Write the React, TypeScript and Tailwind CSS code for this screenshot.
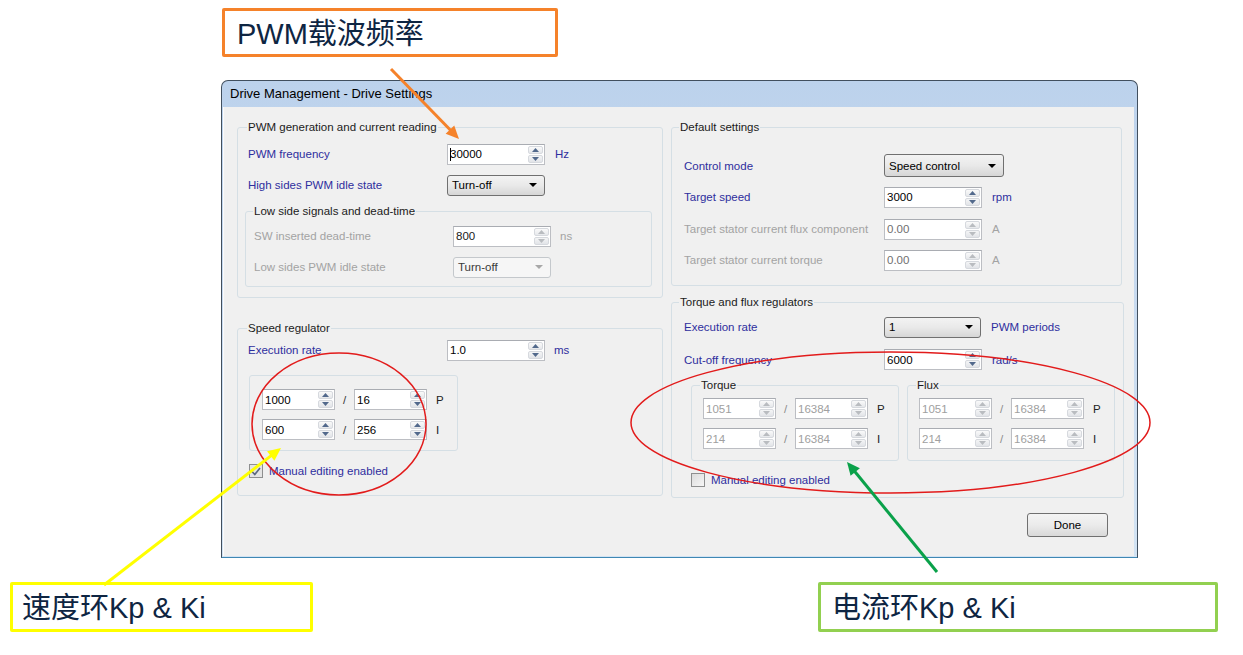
import React from "react";

const UI = "font-['Liberation_Sans',Arial,sans-serif] text-[11.5px] leading-[14px]";
const CJK = "font-['Liberation_Sans','Noto_Sans_CJK_SC',sans-serif]";

const BLUE = "text-[#2e2e9e]";
const GRAY = "text-[#a3a3a3]";

function Spin({ disabled }: { disabled?: boolean }) {
  const c = disabled ? "#b9bcc0" : "#52698c";
  return (
    <div className="flex w-[17px] flex-col gap-px p-px">
      <div className="flex flex-1 items-center justify-center rounded-[2px] border border-[#d6d9de] bg-gradient-to-b from-[#fafafa] to-[#e6e8eb]">
        <svg width="7" height="4" viewBox="0 0 7 4">
          <path d="M3.5 0L7 4H0z" fill={c} />
        </svg>
      </div>
      <div className="flex flex-1 items-center justify-center rounded-[2px] border border-[#d6d9de] bg-gradient-to-b from-[#f4f5f6] to-[#e2e4e8]">
        <svg width="7" height="4" viewBox="0 0 7 4">
          <path d="M0 0h7L3.5 4z" fill={c} />
        </svg>
      </div>
    </div>
  );
}

function NumBox({
  value,
  w = "w-[98px]",
  text = "text-black",
  disabled,
  caret,
}: {
  value: string;
  w?: string;
  text?: string;
  disabled?: boolean;
  caret?: boolean;
}) {
  return (
    <div
      className={`flex h-[21px] ${w} border border-[#bcbec3] border-t-[#a9acb2] bg-white`}
    >
      <div className={`flex flex-1 items-center pl-[2px] ${text}`}>
        {caret && <span className="mr-[-1px] h-[13px] w-px bg-black" />}
        {value}
      </div>
      <Spin disabled={disabled} />
    </div>
  );
}

function Combo({
  value,
  w = "w-[98px]",
  h = "h-[21px]",
  disabled,
}: {
  value: string;
  w?: string;
  h?: string;
  disabled?: boolean;
}) {
  return (
    <div
      className={`flex ${h} ${w} items-center justify-between rounded-[3px] border pl-[4px] pr-[7px] ${
        disabled
          ? "border-[#c4c8cc] bg-[#f6f6f6] text-[#3a3a3a]"
          : "border-[#707070] bg-gradient-to-b from-[#f3f3f3] via-[#e9e9e9] to-[#d6d6d6] text-black"
      }`}
    >
      <span>{value}</span>
      <svg width="8" height="4" viewBox="0 0 8 4">
        <path d="M0 0h8L4 4z" fill={disabled ? "#a8a8a8" : "#000"} />
      </svg>
    </div>
  );
}

function Row({
  label,
  labelClass,
  labelW = "w-[199px]",
  h = "h-[22px]",
  mt,
  children,
  unit,
  unitClass = BLUE,
  unitMl = "ml-[10px]",
}: {
  label: string;
  labelClass: string;
  labelW?: string;
  h?: string;
  mt: string;
  children: React.ReactNode;
  unit?: string;
  unitClass?: string;
  unitMl?: string;
}) {
  return (
    <div className={`flex ${h} ${mt} items-center`}>
      <div className={`${labelW} shrink-0 ${labelClass}`}>{label}</div>
      {children}
      {unit && <span className={`${unitMl} ${unitClass}`}>{unit}</span>}
    </div>
  );
}

function Legend({ children, className = "" }: { children: React.ReactNode; className?: string }) {
  return <legend className={`px-px text-[#1b1b1b] ${className}`}>{children}</legend>;
}

function Gains({
  rows,
  disabled,
}: {
  rows: { a: string; b: string; tag: string }[];
  disabled?: boolean;
}) {
  const t = disabled ? "text-[#a0a0a0]" : "text-black";
  return (
    <div className="flex flex-col gap-[9px]">
      {rows.map((r) => (
        <div key={r.tag} className="flex h-[21px] items-center">
          <NumBox value={r.a} w="w-[73px]" text={t} disabled={disabled} />
          <span className={`w-[19px] text-center ${disabled ? "text-[#8a8a8a]" : "text-[#333]"}`}>
            /
          </span>
          <NumBox value={r.b} w="w-[73px]" text={t} disabled={disabled} />
          <span className="ml-[9px] text-[#222]">{r.tag}</span>
        </div>
      ))}
    </div>
  );
}

function Check({ checked }: { checked?: boolean }) {
  return (
    <div
      className={`flex h-[14px] w-[14px] items-center justify-center border border-[#8e8f8f] ${
        checked ? "bg-[#e4e4e4]" : "bg-gradient-to-br from-[#dcdcdc] to-[#f6f6f6]"
      }`}
    >
      {checked && (
        <svg width="10" height="9" viewBox="0 0 10 9">
          <path d="M1 4.5L3.8 7.5L9 1" fill="none" stroke="#5b6880" strokeWidth="1.7" />
        </svg>
      )}
    </div>
  );
}

function arrowHead(x1: number, y1: number, x2: number, y2: number, len = 13, half = 6) {
  const dx = x2 - x1;
  const dy = y2 - y1;
  const d = Math.hypot(dx, dy);
  const ux = dx / d;
  const uy = dy / d;
  const bx = x2 - ux * len;
  const by = y2 - uy * len;
  return `${x2},${y2} ${bx - uy * half},${by + ux * half} ${bx + uy * half},${by - ux * half}`;
}

function Arrow({ x1, y1, x2, y2, color }: { x1: number; y1: number; x2: number; y2: number; color: string }) {
  const d = Math.hypot(x2 - x1, y2 - y1);
  const ex = x2 - ((x2 - x1) / d) * 10;
  const ey = y2 - ((y2 - y1) / d) * 10;
  return (
    <g>
      <line x1={x1} y1={y1} x2={ex} y2={ey} stroke={color} strokeWidth="3" />
      <polygon points={arrowHead(x1, y1, x2, y2)} fill={color} />
    </g>
  );
}

export default function App() {
  return (
    <div className={`relative h-[655px] w-[1243px] overflow-hidden bg-white ${UI}`}>
      {/* annotation: top */}
      <div
        className={`ml-[222px] mt-[8px] flex h-[49px] w-[336px] items-center rounded-[2px] border-[3px] border-[#f5822a] pl-[12px] pt-[4px] text-[29px] leading-none text-[#0e2542] ${CJK}`}
      >
        PWM载波频率
      </div>

      {/* dialog window */}
      <div className="ml-[221px] mt-[23px] flex h-[478px] w-[917px] flex-col rounded-t-[7px] border border-[#414f5e] border-b-[#3f87b3] bg-gradient-to-b from-[#bcd2ec] via-[#c9dbf0] to-[#d2e3f3] pb-[1px] pl-px pr-[3px]">
        <div className="flex h-[26px] shrink-0 items-center pl-[7px] font-['Liberation_Sans',Arial,sans-serif] text-[13px] text-black">
          Drive Management - Drive Settings
        </div>

        <div className="flex flex-1 flex-col border-l border-[#fbfbfb] bg-[#f0f0f0] pl-[13px] pr-[11px] pt-[13px]">
          <div className="flex gap-[8px]">
            {/* left column */}
            <div className="flex w-[426px] flex-col">
              <fieldset className="rounded-[3px] border border-[#d5dfe5] px-[10px] pb-[10px]">
                <Legend className="ml-[-1px]">PWM generation and current reading</Legend>
                <Row label="PWM frequency" labelClass={BLUE} mt="mt-[9px]" unit="Hz">
                  <NumBox value="30000" caret />
                </Row>
                <Row label="High sides PWM idle state" labelClass={BLUE} mt="mt-[9px]">
                  <Combo value="Turn-off" />
                </Row>
                <fieldset className="ml-[-3px] mt-[8px] w-[407px] rounded-[3px] border border-[#d5dfe5] px-[8px] pb-[8px]">
                  <Legend className="ml-[-1px]">Low side signals and dead-time</Legend>
                  <Row label="SW inserted dead-time" labelClass={GRAY} mt="mt-[7px]" unit="ns" unitClass={GRAY} unitMl="ml-[9px]">
                    <NumBox value="800" text="text-[#1a1a1a]" disabled />
                  </Row>
                  <Row label="Low sides PWM idle state" labelClass={GRAY} mt="mt-[9px]">
                    <Combo value="Turn-off" disabled />
                  </Row>
                </fieldset>
              </fieldset>

              <fieldset className="mt-[23px] rounded-[3px] border border-[#d5dfe5] px-[10px] pb-[17px]">
                <Legend className="ml-[-1px]">Speed regulator</Legend>
                <Row label="Execution rate" labelClass={BLUE} mt="mt-[4px]" unit="ms" unitMl="ml-[9px]">
                  <NumBox value="1.0" />
                </Row>
                <div className="ml-[1px] mt-[14px] w-[209px] rounded-[3px] border border-[#d5dfe5] pb-[10px] pl-[12px] pt-[13px]">
                  <Gains
                    rows={[
                      { a: "1000", b: "16", tag: "P" },
                      { a: "600", b: "256", tag: "I" },
                    ]}
                  />
                </div>
                <div className="ml-[1px] mt-[13px] flex items-center gap-[6px]">
                  <Check checked />
                  <span className={BLUE}>Manual editing enabled</span>
                </div>
              </fieldset>
            </div>

            {/* right column */}
            <div className="flex w-[451px] flex-col">
              <fieldset className="rounded-[3px] border border-[#d5dfe5] px-[8px] pb-[14px]">
                <Legend className="ml-[-1px]">Default settings</Legend>
                <div className="pl-[4px]">
                  <Row label="Control mode" labelClass={BLUE} labelW="w-[200px]" h="h-[23px]" mt="mt-[20px]">
                    <Combo value="Speed control" w="w-[120px]" h="h-[23px]" />
                  </Row>
                  <Row label="Target speed" labelClass={BLUE} labelW="w-[200px]" mt="mt-[9px]" unit="rpm">
                    <NumBox value="3000" />
                  </Row>
                  <Row label="Target stator current flux component" labelClass={GRAY} labelW="w-[200px]" mt="mt-[10px]" unit="A" unitClass={GRAY}>
                    <NumBox value="0.00" text="text-[#6f6f6f]" disabled />
                  </Row>
                  <Row label="Target stator current torque" labelClass={GRAY} labelW="w-[200px]" mt="mt-[9px]" unit="A" unitClass={GRAY}>
                    <NumBox value="0.00" text="text-[#6f6f6f]" disabled />
                  </Row>
                </div>
              </fieldset>

              <fieldset className="mt-[9px] rounded-[3px] border border-[#d5dfe5] px-[8px] pb-[10px]">
                <Legend className="ml-[-1px]">Torque and flux regulators</Legend>
                <div className="pl-[4px]">
                  <Row label="Execution rate" labelClass={BLUE} labelW="w-[200px]" mt="mt-[7px]" unit="PWM periods">
                    <Combo value="1" w="w-[97px]" />
                  </Row>
                  <Row label="Cut-off frequency" labelClass={BLUE} labelW="w-[200px]" h="h-[21px]" mt="mt-[11px]" unit="rad/s">
                    <NumBox value="6000" />
                  </Row>
                  <div className="ml-[7px] mt-[8px] flex gap-[8px]">
                    {[
                      { title: "Torque" },
                      { title: "Flux" },
                    ].map((g) => (
                      <fieldset
                        key={g.title}
                        className="w-[208px] rounded-[3px] border border-[#d5dfe5] pb-[11px] pl-[9px]"
                      >
                        <Legend className="ml-[-1px]">{g.title}</Legend>
                        <div className="mt-[6px] pl-[2px]">
                          <Gains
                            disabled
                            rows={[
                              { a: "1051", b: "16384", tag: "P" },
                              { a: "214", b: "16384", tag: "I" },
                            ]}
                          />
                        </div>
                      </fieldset>
                    ))}
                  </div>
                  <div className="ml-[7px] mt-[12px] flex items-center gap-[6px]">
                    <Check />
                    <span className={BLUE}>Manual editing enabled</span>
                  </div>
                </div>
              </fieldset>
            </div>
          </div>

          <div className="mt-[15px] flex justify-end pr-[15px]">
            <div className="flex h-[24px] w-[81px] items-center justify-center rounded-[3px] border border-[#707070] bg-gradient-to-b from-[#f4f4f4] via-[#ebebeb] to-[#d9d9d9] text-black">
              Done
            </div>
          </div>
        </div>
      </div>

      {/* annotations: bottom */}
      <div className="mt-[24px] flex">
        <div
          className={`ml-[10px] flex h-[50px] w-[303px] items-center rounded-[2px] border-[3px] border-[#ffff00] pl-[9px] pt-[2px] text-[29px] leading-none text-[#0e2542] ${CJK}`}
        >
          速度环Kp &amp; Ki
        </div>
        <div
          className={`ml-[505px] flex h-[50px] w-[400px] items-center rounded-[2px] border-[3px] border-[#92d050] pl-[11px] pt-[2px] text-[29px] leading-none text-[#0e2542] ${CJK}`}
        >
          电流环Kp &amp; Ki
        </div>
      </div>

      {/* overlay marks */}
      <svg
        className="pointer-events-none absolute left-0 top-0"
        width="1243"
        height="655"
        viewBox="0 0 1243 655"
      >
        <ellipse cx="339" cy="424" rx="87" ry="71" fill="none" stroke="#e21b1b" strokeWidth="1.5" />
        <ellipse cx="890.5" cy="422.5" rx="259.5" ry="70.5" fill="none" stroke="#e21b1b" strokeWidth="1.5" />
        <Arrow x1={391} y1={69} x2={459} y2={139} color="#f5822a" />
        <Arrow x1={104} y1={585} x2={281} y2={448} color="#ffff00" />
        <Arrow x1={937} y1={572} x2={847} y2={462} color="#0aa14a" />
      </svg>
    </div>
  );
}
